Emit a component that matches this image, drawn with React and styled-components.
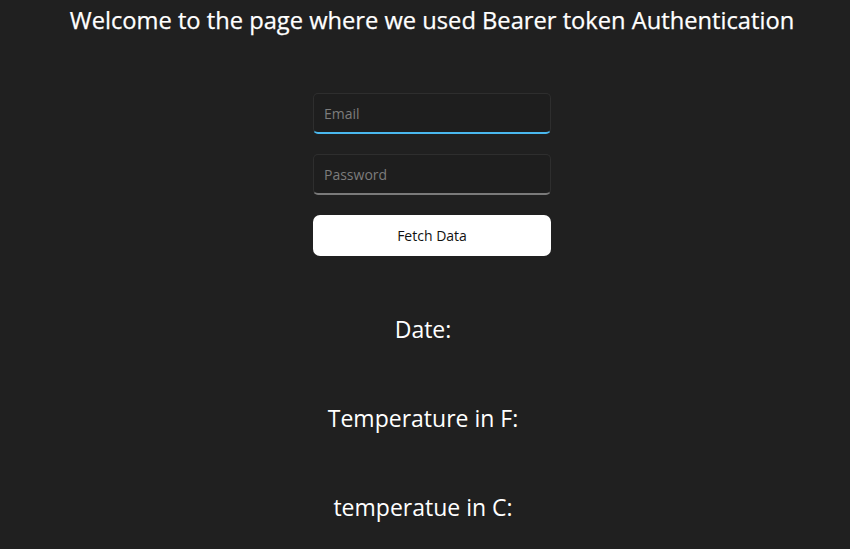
import React from 'react';
import styled, { createGlobalStyle } from 'styled-components';

const Global = createGlobalStyle`
    html, body {
        margin: 0;
        padding: 0;
        background: #202020;
    }
    body {
        font-family: "Open Sans", "Noto Sans", sans-serif;
        color: #fff;
    }
`;

const Page = styled.div`
    display: flex;
    flex-direction: column;
    align-items: center;
    padding: 4px 0 0 14px;
    min-height: 549px;
    box-sizing: border-box;
`;

const Title = styled.h1`
    margin: 0;
    font-size: 23.7px;
    font-weight: 500;
    line-height: 32px;
    color: #fff;
    -webkit-text-stroke: 0.25px #fff;
`;

const Form = styled.form`
    display: flex;
    flex-direction: column;
    gap: 20px;
    width: 238px;
    margin-top: 57px;
`;

const Field = styled.div`
    height: 41px;
    box-sizing: border-box;
    border: 1px solid #2e2e2e;
    border-bottom: 2px solid ${p => (p.focused ? '#4ab8ee' : '#7a7a7a')};
    border-radius: 5px;
    background: #1e1e1e;
    display: flex;
    align-items: center;
`;

const Input = styled.input`
    border: none;
    outline: none;
    background: transparent;
    width: 100%;
    padding: 0 10px;
    font-family: "Open Sans", sans-serif;
    font-size: 14px;
    color: #ddd;
    &::placeholder {
        color: #7c7c7c;
    }
`;

const Button = styled.button`
    height: 41px;
    border: none;
    border-radius: 7px;
    background: #fff;
    color: #111;
    font-family: "Open Sans", sans-serif;
    font-size: 14px;
    cursor: pointer;
`;

const Results = styled.div`
    display: flex;
    flex-direction: column;
    align-items: center;
    gap: 58px;
    margin: 58px 18px 0 0;
`;

const Label = styled.p`
    margin: 0;
    font-size: 23px;
    line-height: 31px;
    color: #fff;
`;

const App = () => {
    return (
        <>
            <Global />
            <Page>
                <Title>Welcome to the page where we used Bearer token Authentication</Title>
                <Form onSubmit={e => e.preventDefault()}>
                    <Field focused>
                        <Input type="email" placeholder="Email" />
                    </Field>
                    <Field>
                        <Input type="password" placeholder="Password" />
                    </Field>
                    <Button type="submit">Fetch Data</Button>
                </Form>
                <Results>
                    <Label>Date:</Label>
                    <Label>Temperature in F:</Label>
                    <Label>temperatue in C:</Label>
                </Results>
            </Page>
        </>
    );
};

export default App;
